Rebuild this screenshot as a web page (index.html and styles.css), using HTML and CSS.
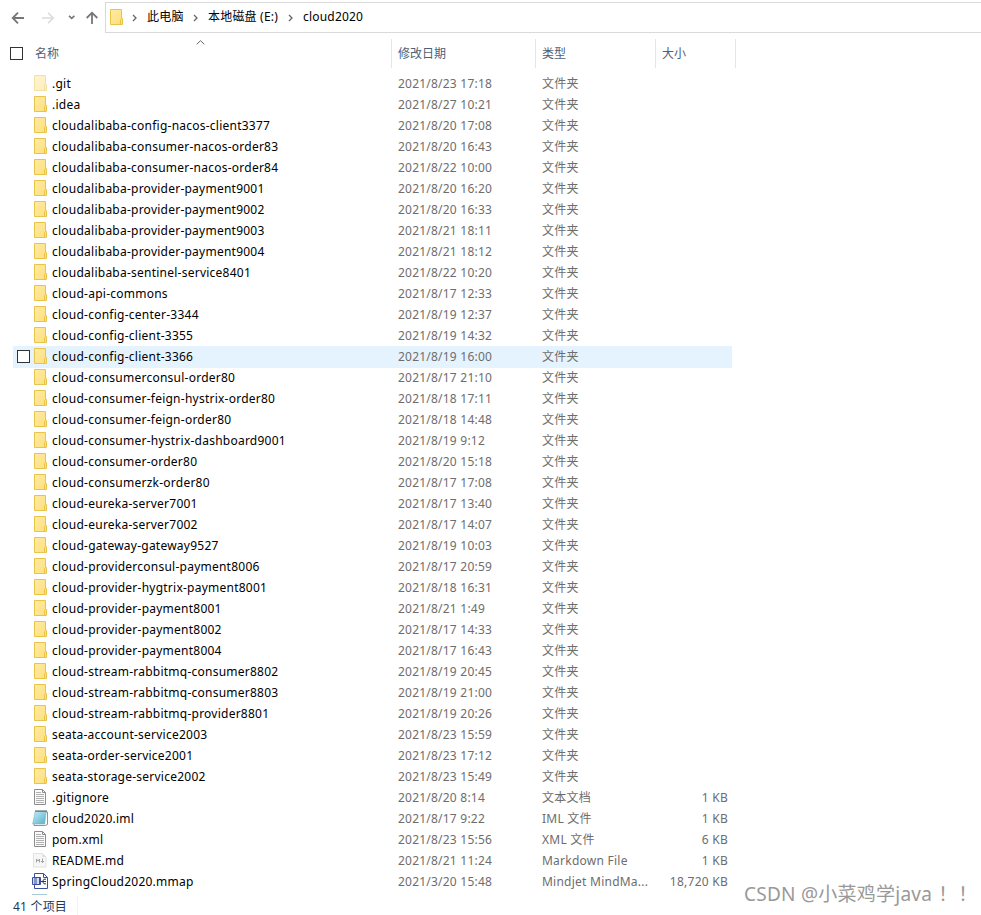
FILE: index.html
```
<!DOCTYPE html>
<html lang="zh-CN">
<head>
  <meta charset="utf-8">
  <title>cloud2020</title>
  <link rel="stylesheet" href="styles.css">
</head>
<body>

  <!-- Icons shared by the rows -->
  <svg class="sprite">
    <defs>
      <linearGradient id="yellow" x1="0" y1="0" x2="1" y2="1">
        <stop offset="0" stop-color="#ffeaa2"/>
        <stop offset="1" stop-color="#fddf7c"/>
      </linearGradient>
      <linearGradient id="blue" x1="0" y1="0" x2="1" y2="1">
        <stop offset="0" stop-color="#c5edf7"/>
        <stop offset="1" stop-color="#55afc9"/>
      </linearGradient>
    </defs>
    <symbol id="folder" viewBox="0 0 16 16">
      <path d="M2.5 .5h11v9h1v6h-12z" fill="url(#yellow)" stroke="#e9c44b"/>
      <path d="M12.5 15V10.5l1-1" fill="none" stroke="#e9c44b"/>
    </symbol>
    <symbol id="text" viewBox="0 0 16 16">
      <path d="M2.5 .5h8l3 3v12h-11z" fill="#fafafa" stroke="#8c8c8c"/>
      <path d="M10.5 .5v3h3" fill="none" stroke="#8c8c8c"/>
      <path d="M4 3.5h5M4 5.5h8M4 7.5h8M4 9.5h8M4 11.5h8M4 13.5h8" stroke="#b0b0b0"/>
    </symbol>
    <symbol id="notepad" viewBox="0 0 16 16">
      <path d="M4 2h11.5v12.5L13 15.5H2z" fill="#fff" stroke="#a58f71"/>
      <path d="M3.2 1.5h11L12.7 14H.7z" fill="url(#blue)" stroke="#71b7ca" stroke-width=".6"/>
      <path d="M3.5 1h11" stroke="#42575e" stroke-width="2" stroke-dasharray="1 1"/>
    </symbol>
    <symbol id="markdown" viewBox="0 0 16 16">
      <path d="M1.5 1.5h9l3.5 3.5v10h-12.5z" fill="#f7f7f7" stroke="#e2e2e2"/>
      <path d="M10.5 1.5V5H14z" fill="#ddd"/>
      <path d="M4.5 10.5V7l1.5 2 1.5-2v3.5M10.5 6.5v4M9 9l1.5 1.7L12 9" fill="none" stroke="#a2a2a2"/>
    </symbol>
    <symbol id="mmap" viewBox="0 0 16 16">
      <path d="M2.5 .5h9l4 4v11h-13z" fill="#fff" stroke="#3a4fa0"/>
      <path d="M11.5 .5v4h4" fill="none" stroke="#3a4fa0"/>
      <path d="M.5 4.5h8v7h-8z" fill="#d8ddf0" stroke="#3a4fa0"/>
      <path d="M2 5h3v6H2z" fill="#8793c5"/>
      <path d="M7 5h2v6H7z" fill="#3a4fa0"/>
      <path d="M9 8.5h5M14 6.2h-2l-1.5 2.3 1.5 2.3h2" fill="none" stroke="#333a55"/>
    </symbol>
  </svg>

  <div class="toolbar">
    <svg class="nav" width="105" height="34" fill="none">
      <path d="M24 18H13M18 12.7L12.7 18l5.3 5.3" stroke="#767676" stroke-width="1.8"/>
      <path d="M42 18h11M48 12.7l5.3 5.3-5.3 5.3" stroke="#dcdcdc" stroke-width="1.6"/>
      <path d="M69 15.8l2.7 2.6 2.7-2.6" stroke="#767676" stroke-width="1.6"/>
      <path d="M92 24V13M86.7 18l5.3-5.3 5.3 5.3" stroke="#767676" stroke-width="1.8"/>
    </svg>
    <div class="address">
      <svg class="icon"><use href="#folder"/></svg>
      <svg class="chevron" viewBox="0 0 5 8"><path d="M1 1l3 3-3 3"/></svg>
      <span class="crumb crumb-pc">此电脑</span>
      <svg class="chevron" viewBox="0 0 5 8"><path d="M1 1l3 3-3 3"/></svg>
      <span class="crumb crumb-disk">本地磁盘 (E:)</span>
      <svg class="chevron" viewBox="0 0 5 8"><path d="M1 1l3 3-3 3"/></svg>
      <span class="crumb">cloud2020</span>
    </div>
  </div>

  <div class="header">
    <div class="head head-name">
      <span class="checkbox"></span>名称
      <svg class="sort" viewBox="0 0 9 5"><path d="M.7 4.3l3.8-3.6 3.8 3.6"/></svg>
    </div>
    <div class="head">修改日期</div>
    <div class="head">类型</div>
    <div class="head">大小</div>
  </div>

  <div class="files" id="files"></div>

  <div class="next-row"><span></span></div>

  <div class="status">41 个项目</div>
  <div class="watermark">CSDN @小菜鸡学java<span class="marks">！！</span></div>

  <script>
    const folders = [
      ['.git', '2021/8/23 17:18'],
      ['.idea', '2021/8/27 10:21'],
      ['cloudalibaba-config-nacos-client3377', '2021/8/20 17:08'],
      ['cloudalibaba-consumer-nacos-order83', '2021/8/20 16:43'],
      ['cloudalibaba-consumer-nacos-order84', '2021/8/22 10:00'],
      ['cloudalibaba-provider-payment9001', '2021/8/20 16:20'],
      ['cloudalibaba-provider-payment9002', '2021/8/20 16:33'],
      ['cloudalibaba-provider-payment9003', '2021/8/21 18:11'],
      ['cloudalibaba-provider-payment9004', '2021/8/21 18:12'],
      ['cloudalibaba-sentinel-service8401', '2021/8/22 10:20'],
      ['cloud-api-commons', '2021/8/17 12:33'],
      ['cloud-config-center-3344', '2021/8/19 12:37'],
      ['cloud-config-client-3355', '2021/8/19 14:32'],
      ['cloud-config-client-3366', '2021/8/19 16:00'],
      ['cloud-consumerconsul-order80', '2021/8/17 21:10'],
      ['cloud-consumer-feign-hystrix-order80', '2021/8/18 17:11'],
      ['cloud-consumer-feign-order80', '2021/8/18 14:48'],
      ['cloud-consumer-hystrix-dashboard9001', '2021/8/19 9:12'],
      ['cloud-consumer-order80', '2021/8/20 15:18'],
      ['cloud-consumerzk-order80', '2021/8/17 17:08'],
      ['cloud-eureka-server7001', '2021/8/17 13:40'],
      ['cloud-eureka-server7002', '2021/8/17 14:07'],
      ['cloud-gateway-gateway9527', '2021/8/19 10:03'],
      ['cloud-providerconsul-payment8006', '2021/8/17 20:59'],
      ['cloud-provider-hygtrix-payment8001', '2021/8/18 16:31'],
      ['cloud-provider-payment8001', '2021/8/21 1:49'],
      ['cloud-provider-payment8002', '2021/8/17 14:33'],
      ['cloud-provider-payment8004', '2021/8/17 16:43'],
      ['cloud-stream-rabbitmq-consumer8802', '2021/8/19 20:45'],
      ['cloud-stream-rabbitmq-consumer8803', '2021/8/19 21:00'],
      ['cloud-stream-rabbitmq-provider8801', '2021/8/19 20:26'],
      ['seata-account-service2003', '2021/8/23 15:59'],
      ['seata-order-service2001', '2021/8/23 17:12'],
      ['seata-storage-service2002', '2021/8/23 15:49']
    ];
    const files = [
      ['.gitignore', '2021/8/20 8:14', '文本文档', '1 KB', 'text'],
      ['cloud2020.iml', '2021/8/17 9:22', 'IML 文件', '1 KB', 'notepad'],
      ['pom.xml', '2021/8/23 15:56', 'XML 文件', '6 KB', 'text'],
      ['README.md', '2021/8/21 11:24', 'Markdown File', '1 KB', 'markdown'],
      ['SpringCloud2020.mmap', '2021/3/20 15:48', 'Mindjet MindMa...', '18,720 KB', 'mmap']
    ];
    const hovered = 'cloud-config-client-3366';
    const list = document.getElementById('files');

    function addRow([name, date, type = '文件夹', size = '', icon = 'folder']) {
      const row = document.createElement('div');
      row.className = 'row';
      if (name === hovered) row.classList.add('hovered');
      if (name === '.git') row.classList.add('hidden-folder');
      row.innerHTML = `
        <span class="check">${name === hovered ? '<span class="checkbox"></span>' : ''}</span>
        <svg class="icon"><use href="#${icon}"/></svg>
        <span class="name">${name}</span>
        <span class="date">${date}</span>
        <span class="type">${type}</span>
        <span class="size">${size}</span>`;
      list.appendChild(row);
    }

    folders.forEach(addRow);
    files.forEach(addRow);
  </script>

</body>
</html>
```
FILE: styles.css
```
* {
  box-sizing: border-box;
}

body {
  margin: 0;
  height: 915px;
  overflow: hidden;
  background: #fff;
  color: #000;
  font: 12px/21px "Noto Sans", "Noto Sans CJK SC", sans-serif;
  white-space: nowrap;
}

svg {
  display: block;
  flex: none;
}

.sprite {
  position: absolute;
  width: 0;
  height: 0;
}

.icon {
  width: 16px;
  height: 16px;
}

/* Navigation and address */
.toolbar {
  display: flex;
  height: 35px;
}

.address {
  display: flex;
  align-items: center;
  flex: 1;
  height: 31px;
  margin-top: 2px;
  padding-left: 2px;
  border: 1px solid #d9d9d9;
  border-right: 0;
}

.address .icon {
  margin-bottom: 1px;
}

.address .chevron {
  margin-left: 8px;
}

.chevron {
  width: 5px;
  height: 8px;
  fill: none;
  stroke: #666;
  stroke-width: 1.3;
}

.crumb {
  margin-left: 10px;
  padding-bottom: 2px;
  letter-spacing: .2px;
}

.crumb-pc {
  width: 38px;
}

.crumb-disk {
  width: 72px;
}

/* Column titles */
.header {
  display: grid;
  grid-template-columns: 392px 144px 120px 80px;
  height: 38px;
  padding-top: 4px;
}

.head {
  height: 29px;
  padding-left: 6px;
  border-right: 1px solid #e5e5e5;
  color: #4c607a;
  line-height: 29px;
}

.head-name {
  position: relative;
  display: flex;
  align-items: center;
  gap: 12px;
  padding-left: 10px;
}

.checkbox {
  display: block;
  flex: none;
  width: 13px;
  height: 13px;
  border: 1px solid #333;
  background: #fff;
}

.sort {
  position: absolute;
  left: 196px;
  top: 1px;
  width: 9px;
  height: 5px;
  fill: none;
  stroke: #666;
}

/* File rows */
.files {
  width: 719px;
  margin-left: 13px;
}

.row {
  display: grid;
  grid-template-columns: 19px 20px 346px 144px 110px 1fr;
  align-items: center;
  height: 21px;
  color: #6d6d6d;
}

.row .icon {
  align-self: start;
  margin-top: 2px;
}

.row.hovered {
  background: #e5f3ff;
  box-shadow: 0 1px #e5f3ff;
}

.hidden-folder .icon {
  opacity: .5;
}

.check {
  padding-left: 4px;
}

.name {
  color: #000;
  letter-spacing: .24px;
}

.date {
  letter-spacing: .22px;
}

.type {
  letter-spacing: .24px;
}

.size {
  padding-right: 4px;
  letter-spacing: .25px;
  text-align: right;
}

.next-row {
  height: 4px;
  padding: 2px 0 0 32px;
}

.next-row span {
  display: block;
  width: 15px;
  height: 1px;
  background: #a7cbdc;
}

.status {
  width: 78px;
  height: 19px;
  padding-left: 13px;
  border-right: 1px solid #f3f3f3;
  color: #1e395b;
  letter-spacing: .2px;
  line-height: 21px;
}

.watermark {
  position: absolute;
  left: 744px;
  top: 880px;
  color: #999;
  font-size: 19px;
  letter-spacing: .25px;
  line-height: 28px;
}

.marks {
  margin-left: 6px;
  letter-spacing: 1px;
}
```
